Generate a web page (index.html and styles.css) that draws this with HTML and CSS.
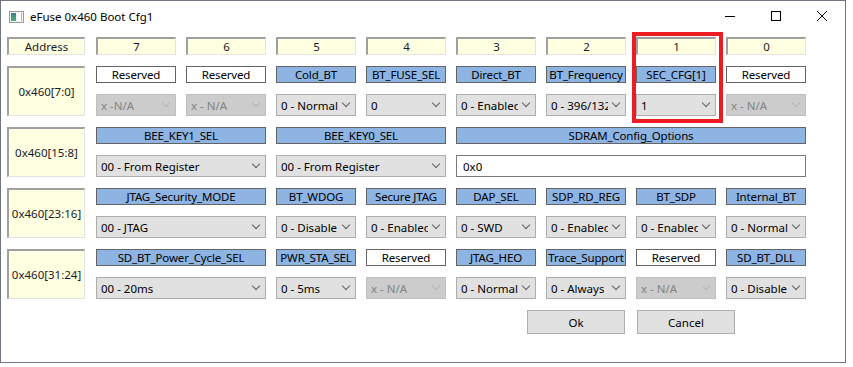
FILE: index.html
```html
<!DOCTYPE html>
<html>
<head>
<meta charset="utf-8">
<title>eFuse 0x460 Boot Cfg1</title>
<link rel="stylesheet" href="styles.css">
</head>
<body>
<div class="window">
  <div class="titlebar">
    <svg class="appicon" width="15" height="12" viewBox="0 0 15 12">
      <defs>
        <linearGradient id="g" x1="0" y1="0" x2="0" y2="1">
          <stop offset="0" stop-color="#3d7f8c"/>
          <stop offset="1" stop-color="#4fb07a"/>
        </linearGradient>
      </defs>
      <rect x="0.5" y="0.5" width="14" height="11" fill="#f2f2f2" stroke="#9a9a9a"/>
      <rect x="2" y="2" width="5" height="8" fill="url(#g)"/>
      <rect x="8" y="2" width="5" height="8" fill="#ffffff"/>
      <rect x="12" y="2" width="1" height="8" fill="#b8b8b8"/>
    </svg>
    <span class="title">eFuse 0x460 Boot Cfg1</span>
    <div class="controls">
      <span class="ctl"><svg width="10" height="10" viewBox="0 0 10 10"><path d="M0 5.5 H10" stroke="#000" stroke-width="1"/></svg></span>
      <span class="ctl"><svg width="10" height="10" viewBox="0 0 10 10"><rect x="0.5" y="0.5" width="9" height="9" fill="none" stroke="#000"/></svg></span>
      <span class="ctl"><svg width="10" height="10" viewBox="0 0 10 10"><path d="M0 0 L10 10 M10 0 L0 10" stroke="#000" stroke-width="1"/></svg></span>
    </div>
  </div>

  <div class="form">
    <div class="hdr">Address</div>
    <div class="hdr">7</div>
    <div class="hdr">6</div>
    <div class="hdr">5</div>
    <div class="hdr">4</div>
    <div class="hdr">3</div>
    <div class="hdr">2</div>
    <div class="hdr">1</div>
    <div class="hdr">0</div>

    <!-- 0x460[7:0] -->
    <div class="addr">0x460[7:0]</div>
    <div class="lbl white">Reserved</div>
    <div class="lbl white">Reserved</div>
    <div class="lbl">Cold_BT</div>
    <div class="lbl">BT_FUSE_SEL</div>
    <div class="lbl">Direct_BT</div>
    <div class="lbl">BT_Frequency</div>
    <div class="lbl">SEC_CFG[1]</div>
    <div class="lbl white">Reserved</div>
    <div class="combo disabled"><span>x -N/A</span></div>
    <div class="combo disabled"><span>x - N/A</span></div>
    <div class="combo"><span>0 - Normal</span></div>
    <div class="combo"><span>0</span></div>
    <div class="combo"><span>0 - Enabled</span></div>
    <div class="combo"><span>0 - 396/132</span></div>
    <div class="combo"><span>1</span></div>
    <div class="combo disabled"><span>x - N/A</span></div>

    <!-- 0x460[15:8] -->
    <div class="addr">0x460[15:8]</div>
    <div class="lbl span2">BEE_KEY1_SEL</div>
    <div class="lbl span2">BEE_KEY0_SEL</div>
    <div class="lbl span4">SDRAM_Config_Options</div>
    <div class="combo span2"><span>00 - From Register</span></div>
    <div class="combo span2"><span>00 - From Register</span></div>
    <div class="textbox span4">0x0</div>

    <!-- 0x460[23:16] -->
    <div class="addr">0x460[23:16]</div>
    <div class="lbl span2">JTAG_Security_MODE</div>
    <div class="lbl">BT_WDOG</div>
    <div class="lbl">Secure JTAG</div>
    <div class="lbl">DAP_SEL</div>
    <div class="lbl">SDP_RD_REG</div>
    <div class="lbl">BT_SDP</div>
    <div class="lbl">Internal_BT</div>
    <div class="combo span2"><span>00 - JTAG</span></div>
    <div class="combo"><span>0 - Disable</span></div>
    <div class="combo"><span>0 - Enabled</span></div>
    <div class="combo"><span>0 - SWD</span></div>
    <div class="combo"><span>0 - Enabled</span></div>
    <div class="combo"><span>0 - Enabled</span></div>
    <div class="combo"><span>0 - Normal</span></div>

    <!-- 0x460[31:24] -->
    <div class="addr">0x460[31:24]</div>
    <div class="lbl span2">SD_BT_Power_Cycle_SEL</div>
    <div class="lbl">PWR_STA_SEL</div>
    <div class="lbl white">Reserved</div>
    <div class="lbl">JTAG_HEO</div>
    <div class="lbl">Trace_Support</div>
    <div class="lbl white">Reserved</div>
    <div class="lbl">SD_BT_DLL</div>
    <div class="combo span2"><span>00 - 20ms</span></div>
    <div class="combo"><span>0 - 5ms</span></div>
    <div class="combo disabled"><span>x - N/A</span></div>
    <div class="combo"><span>0 - Normal</span></div>
    <div class="combo"><span>0 - Always</span></div>
    <div class="combo disabled"><span>x - N/A</span></div>
    <div class="combo"><span>0 - Disable</span></div>
  </div>

  <div class="buttons">
    <button class="btn">Ok</button>
    <button class="btn">Cancel</button>
  </div>

  <div class="highlight"></div>
</div>
</body>
</html>
```

FILE: styles.css
```css
html, body {
  margin: 0;
  padding: 0;
  background: #ffffff;
}

body {
  font-family: "Noto Sans", "DejaVu Sans", sans-serif;
  font-size: 11.5px;
  color: #000;
}

.window {
  position: relative;
  width: 846px;
  height: 363px;
  box-sizing: border-box;
  border: 1px solid #6f7682;
  background: #ffffff;
}

.titlebar {
  height: 30px;
  display: flex;
  align-items: center;
}

.appicon {
  margin-left: 8px;
  margin-top: 1px;
}

.title {
  margin-left: 6px;
  font-size: 11.5px;
  color: #000;
}

.controls {
  margin-left: auto;
  display: flex;
  height: 30px;
}

.ctl {
  width: 46px;
  height: 30px;
  display: flex;
  align-items: center;
  justify-content: center;
}

.form {
  display: grid;
  grid-template-columns: 79px repeat(8, 80px);
  grid-template-rows: 18px repeat(4, 17px 22px);
  column-gap: 10px;
  row-gap: 11px;
  padding-left: 6px;
  padding-top: 6px;
}

.hdr,
.addr {
  width: 78px;
  box-sizing: border-box;
  background: #ffffe1;
  border-top: 2px solid #a0a0a0;
  border-left: 2px solid #a0a0a0;
  border-right: 1px solid #e3e3e3;
  border-bottom: 1px solid #e3e3e3;
  display: flex;
  align-items: center;
  justify-content: center;
  color: #1a1a2a;
  white-space: nowrap;
}

.hdr + .hdr {
  width: 80px;
}

.addr {
  grid-row: span 2;
}

.lbl {
  box-sizing: border-box;
  background: #8db4e3;
  border: 1px solid #646464;
  display: flex;
  align-items: center;
  justify-content: center;
  white-space: nowrap;
  overflow: hidden;
  letter-spacing: -0.15px;
  color: #000;
}

.lbl.white {
  background: #ffffff;
}

.span2 {
  grid-column: span 2;
}

.span4 {
  grid-column: span 4;
}

.combo {
  position: relative;
  box-sizing: border-box;
  background: #e1e1e1;
  border: 1px solid #adadad;
  display: flex;
  align-items: center;
  padding-left: 4px;
  padding-right: 17px;
  overflow: hidden;
}

.combo span {
  white-space: nowrap;
  overflow: hidden;
  display: block;
}

.combo::after {
  content: "";
  position: absolute;
  right: 6px;
  top: 5px;
  width: 5px;
  height: 5px;
  border-right: 1px solid #606060;
  border-bottom: 1px solid #606060;
  transform: rotate(45deg);
}

.combo.disabled {
  background: #cccccc;
  border-color: #bfbfbf;
  color: #838383;
}

.combo.disabled::after {
  border-color: #b5b5b5;
}

.textbox {
  box-sizing: border-box;
  background: #ffffff;
  border: 1px solid #7a7a7a;
  display: flex;
  align-items: center;
  padding-left: 6px;
}

.buttons {
  display: flex;
  gap: 12px;
  padding-left: 526px;
  margin-top: 11px;
}

.btn {
  width: 98px;
  height: 24px;
  box-sizing: border-box;
  background: #e1e1e1;
  border: 1px solid #adadad;
  font-family: inherit;
  font-size: 11.5px;
  color: #000;
  padding: 0;
}

.highlight {
  position: absolute;
  left: 631px;
  top: 31px;
  width: 91px;
  height: 91px;
  box-sizing: border-box;
  border: 4px solid #ed1c24;
}
```
